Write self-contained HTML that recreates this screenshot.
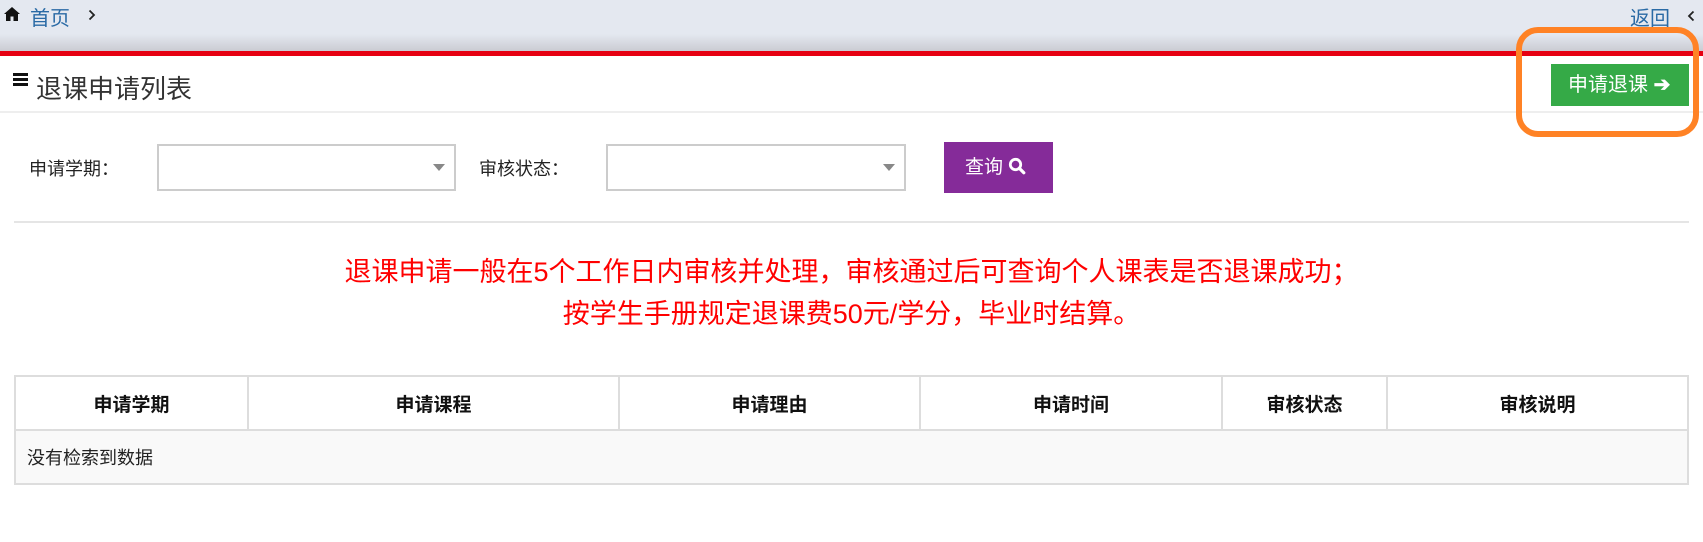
<!DOCTYPE html>
<html><head><meta charset="utf-8"><style>
*{margin:0;padding:0;box-sizing:border-box}
body{width:1703px;height:542px;background:#fff;position:relative;overflow:hidden;font-family:"Liberation Sans","Noto Sans CJK SC",sans-serif;color:#222}
.a{position:absolute}
.top{left:0;top:0;width:1703px;height:52px;background:linear-gradient(#e4e8f0 0,#e4e8f0 34px,#c9cad1 52px)}
.red{left:0;top:51px;width:1703px;height:5px;background:#e60012}
.sel{border:2px solid #ccc;background:#fff;height:47px}
.sel:after{content:"";position:absolute;right:9px;top:18px;border-left:6px solid transparent;border-right:6px solid transparent;border-top:7px solid #888}
table{position:absolute;left:14px;top:375px;width:1675px;border-collapse:collapse}
td,th{border:2px solid #ddd}
th{height:54px;font-weight:bold;color:#111;font-size:19px}
td{height:54px;background:#f9f9f9;padding-left:11px;font-size:18px}
</style></head><body>
<div class="a top"></div>
<div class="a red"></div>
<svg class="a" style="left:4px;top:7px" width="16" height="14" viewBox="0 0 16 14"><path d="M8 0L0 7h2v7h4.5V9.5h3V14H14V7h2z" fill="#111"/></svg>
<div class="a" style="left:30px;top:2px;font-size:20px;color:#2a6aa5">首页</div>
<svg class="a" style="left:88px;top:9px" width="8" height="12" viewBox="0 0 8 12"><path d="M1.5 1.5L6 6l-4.5 4.5" fill="none" stroke="#222" stroke-width="1.8"/></svg>
<div class="a" style="left:1630px;top:2px;font-size:20px;color:#2a6aa5">返回</div>
<svg class="a" style="left:1687px;top:10px" width="8" height="12" viewBox="0 0 8 12"><path d="M6.5 1.5L2 6l4.5 4.5" fill="none" stroke="#222" stroke-width="1.8"/></svg>
<div class="a" style="left:13px;top:73px;width:15px;height:3px;background:#111;box-shadow:0 5px 0 #111,0 10px 0 #111"></div>
<div class="a" style="left:36px;top:69px;font-size:26px;color:#333">退课申请列表</div>
<div class="a" style="left:0;top:111px;width:1703px;height:2px;background:#eee"></div>
<div class="a" style="left:1551px;top:64px;width:138px;height:42px;background:#35aa47;color:#fff;font-size:20px;line-height:42px;padding-left:17px;white-space:nowrap">申请退课 <b style="font-size:20px">➔</b></div>
<div class="a" style="left:1516px;top:27px;width:183px;height:110px;border:6px solid #ff8225;border-radius:22px"></div>
<div class="a" style="left:29px;top:155px;font-size:18px">申请学期：</div>
<div class="a sel" style="left:157px;top:144px;width:299px"></div>
<div class="a" style="left:479px;top:155px;font-size:18px">审核状态：</div>
<div class="a sel" style="left:606px;top:144px;width:300px"></div>
<div class="a" style="left:944px;top:142px;width:109px;height:51px;background:#852b99;color:#fff;font-size:19px;line-height:51px;padding-left:21px">查询 <svg width="18" height="18" viewBox="0 0 18 18" style="vertical-align:-2px"><circle cx="7.5" cy="7.5" r="5.2" fill="none" stroke="#fff" stroke-width="2.8"/><path d="M11.3 11.3l4.5 4.5" stroke="#fff" stroke-width="3.2" stroke-linecap="round"/></svg></div>
<div class="a" style="left:14px;top:221px;width:1675px;height:2px;background:#e5e5e5"></div>
<div class="a" style="left:0;width:1703px;top:251px;text-align:center;font-size:27px;line-height:42px;color:#f00">退课申请一般在5个工作日内审核并处理，审核通过后可查询个人课表是否退课成功；<br>按学生手册规定退课费50元/学分，毕业时结算。</div>
<table><tr><th style="width:233px">申请学期</th><th style="width:371px">申请课程</th><th style="width:301px">申请理由</th><th style="width:302px">申请时间</th><th style="width:165px">审核状态</th><th>审核说明</th></tr>
<tr><td colspan="6">没有检索到数据</td></tr></table>
</body></html>
